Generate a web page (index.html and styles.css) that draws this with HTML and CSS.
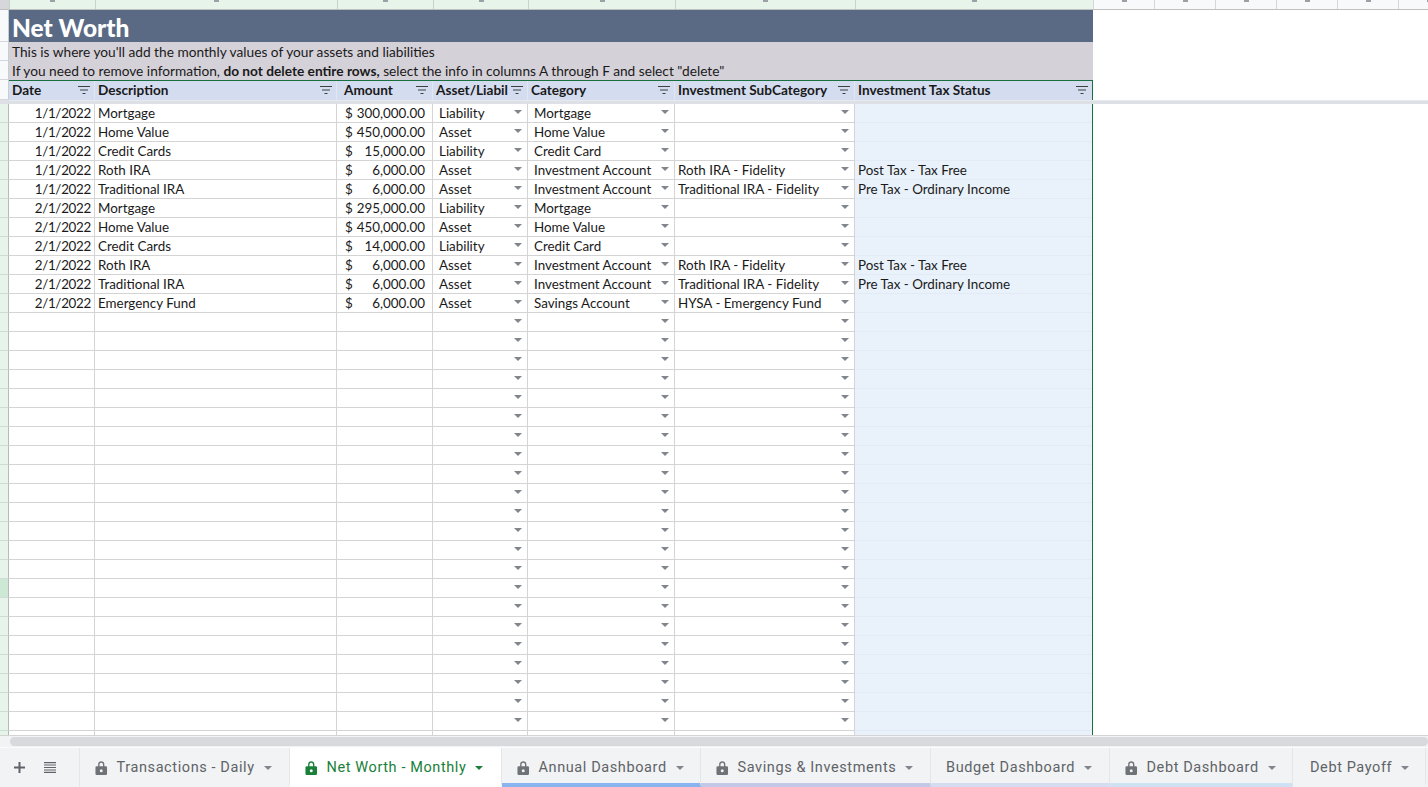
FILE: index.html
```html
<!DOCTYPE html>
<html lang="en">
<head>
    <meta charset="UTF-8">
    <title>Net Worth - Monthly</title>
    <link rel="stylesheet" href="styles.css">
</head>
<body>
    <div id="app">
        <div class="col-headers">
            <div class="corner"></div>
            <div class="col-head sel w-a"></div>
            <div class="col-head sel w-b"></div>
            <div class="col-head sel w-c"></div>
            <div class="col-head sel w-d"></div>
            <div class="col-head sel w-e"></div>
            <div class="col-head sel w-f"></div>
            <div class="col-head sel w-g"></div>
            <div class="col-head w-x"></div>
            <div class="col-head w-x"></div>
            <div class="col-head w-x"></div>
            <div class="col-head w-x"></div>
            <div class="col-head w-x"></div>
            <div class="col-head w-x"></div>
        </div>
        <div class="sheet">
            <div class="row-headers" id="row-headers"></div>
            <div class="grid-area">
                <div class="frozen">
                    <div class="title">Net Worth</div>
                    <div class="notes">
                        <div>This is where you'll add the monthly values of your assets and liabilities</div>
                        <div>If you need to remove information, <b>do not delete entire rows,</b> select the info in columns A through F and select "delete"</div>
                    </div>
                    <div class="table-head" id="table-head"></div>
                </div>
                <div class="freeze-bar"></div>
                <div class="rows" id="rows"></div>
            </div>
        </div>
        <div class="scrollbar"><div class="thumb"></div></div>
        <div class="tabbar">
            <div class="tab-tools">
                <svg class="tool" viewBox="0 0 11 11" width="11" height="11"><path d="M4.5 0h2v4.5H11v2H6.5V11h-2V6.5H0v-2h4.5z" fill="#5f6368"/></svg>
                <svg class="tool" viewBox="0 0 12 11" width="12" height="11"><path d="M0 0h12v1.2H0zM0 2.4h12v1.2H0zM0 4.9h12v1.2H0zM0 7.4h12v1.2H0zM0 9.8h12V11H0z" fill="#5f6368"/></svg>
            </div>
            <div id="tabs" class="tabs"></div>
        </div>
    </div>

    <script>
        const heads = [
            ['Date', 'w-a'], ['Description', 'w-b'], ['Amount', 'w-c'], ['Asset/Liabil', 'w-d'],
            ['Category', 'w-e'], ['Investment SubCategory', 'w-f'], ['Investment Tax Status', 'w-g']
        ];
        const data = [
            ['1/1/2022', 'Mortgage', '300,000.00', 'Liability', 'Mortgage', '', ''],
            ['1/1/2022', 'Home Value', '450,000.00', 'Asset', 'Home Value', '', ''],
            ['1/1/2022', 'Credit Cards', '15,000.00', 'Liability', 'Credit Card', '', ''],
            ['1/1/2022', 'Roth IRA', '6,000.00', 'Asset', 'Investment Account', 'Roth IRA - Fidelity', 'Post Tax - Tax Free'],
            ['1/1/2022', 'Traditional IRA', '6,000.00', 'Asset', 'Investment Account', 'Traditional IRA - Fidelity', 'Pre Tax - Ordinary Income'],
            ['2/1/2022', 'Mortgage', '295,000.00', 'Liability', 'Mortgage', '', ''],
            ['2/1/2022', 'Home Value', '450,000.00', 'Asset', 'Home Value', '', ''],
            ['2/1/2022', 'Credit Cards', '14,000.00', 'Liability', 'Credit Card', '', ''],
            ['2/1/2022', 'Roth IRA', '6,000.00', 'Asset', 'Investment Account', 'Roth IRA - Fidelity', 'Post Tax - Tax Free'],
            ['2/1/2022', 'Traditional IRA', '6,000.00', 'Asset', 'Investment Account', 'Traditional IRA - Fidelity', 'Pre Tax - Ordinary Income'],
            ['2/1/2022', 'Emergency Fund', '6,000.00', 'Asset', 'Savings Account', 'HYSA - Emergency Fund', '']
        ];
        const tabs = [
            { name: 'Transactions - Daily', lock: true, cls: 'tab-1' },
            { name: 'Net Worth - Monthly', lock: true, cls: 'tab-2 active' },
            { name: 'Annual Dashboard', lock: true, cls: 'tab-3' },
            { name: 'Savings & Investments', lock: true, cls: 'tab-4' },
            { name: 'Budget Dashboard', lock: false, cls: 'tab-5' },
            { name: 'Debt Dashboard', lock: true, cls: 'tab-6' },
            { name: 'Debt Payoff', lock: false, cls: 'tab-7' }
        ];
        const lockIcon = '<svg class="lock" viewBox="0 0 14 18" width="12.5" height="16"><path fill-rule="evenodd" d="M3.5 7V5a3.5 3.5 0 0 1 7 0v2H12a1.5 1.5 0 0 1 1.5 1.5v7A1.5 1.5 0 0 1 12 17H2a1.5 1.5 0 0 1-1.5-1.5v-7A1.5 1.5 0 0 1 2 7zM5 7h4V5a2 2 0 0 0-4 0zM7 10.3a1.7 1.7 0 1 0 0 3.4 1.7 1.7 0 0 0 0-3.4z"/></svg>';
        const filterIcon = '<svg class="filter" viewBox="0 0 12 8" width="12" height="8"><path d="M0 0h12v1H0zM2 3.5h8v1H2zM4.5 7h3v1h-3z"/></svg>';
        const arrow = '<span class="arrow"></span>';

        document.getElementById('table-head').innerHTML = heads.map(h =>
            `<div class="th ${h[1]}"><span>${h[0]}</span>${filterIcon}</div>`).join('');

        function rowHtml(r) {
            return `<div class="tr">
                <div class="td w-a right">${r[0]}</div>
                <div class="td w-b">${r[1]}</div>
                <div class="td w-c money">${r[2] ? '<span>$</span><span>' + r[2] + '</span>' : ''}</div>
                <div class="td w-d chip">${r[3]}${arrow}</div>
                <div class="td w-e chip">${r[4]}${arrow}</div>
                <div class="td w-f">${r[5]}${arrow}</div>
                <div class="td w-g tax">${r[6]}</div>
            </div>`;
        }
        let html = data.map(rowHtml).join('');
        for (let i = 0; i < 23; i++) html += rowHtml(['', '', '', '', '', '', '']);
        document.getElementById('rows').innerHTML = html;

        // row numbers are cut off in the shot, only the cells are left
        let strip = '<div class="rh rh-corner"></div><div class="rh rh-note"></div><div class="rh rh-note"></div><div class="rh rh-head"></div><div class="rh-bar"></div>';
        for (let i = 0; i < 34; i++) strip += `<div class="rh rh-row${i === 25 ? ' rh-sel' : ''}"></div>`;
        document.getElementById('row-headers').innerHTML = strip;

        document.getElementById('tabs').innerHTML = tabs.map(t =>
            `<div class="tab ${t.cls}">${t.lock ? lockIcon : ''}<span class="tab-name">${t.name.replace('&', '&amp;')}</span><span class="tab-arrow"></span></div>`).join('');
    </script>
</body>
</html>
```

FILE: styles.css
```css
html, body {
    margin: 0;
    padding: 0;
    height: 100%;
    overflow: hidden;
    background-color: white;
}
#app {
    width: 1428px;
    height: 787px;
    display: flex;
    flex-direction: column;
    overflow: hidden;
    font-family: Lato, 'Open Sans', sans-serif;
    font-size: 13.4px;
    color: #1a1a1a;
}
.w-a { width: 86px; }
.w-b { width: 242px; }
.w-c { width: 96px; }
.w-d { width: 95px; }
.w-e { width: 147px; }
.w-f { width: 180px; }
.w-g { width: 238px; }
.w-x { width: 61px; }

.col-headers {
    display: flex;
    height: 10px;
    flex: none;
    box-sizing: border-box;
    border-bottom: 1px solid #c0c0c0;
    background-color: #f8f9fa;
}
.corner {
    width: 9px;
    flex: none;
    background-color: #d5d7da;
}
.col-head {
    flex: none;
    box-sizing: border-box;
    border-left: 1px solid #d3d6da;
    display: flex;
    justify-content: center;
}
/* just the foot of the column letter shows above the sheet */
.col-head::after {
    content: "";
    width: 5px;
    height: 2px;
    background-color: #9aa0a6;
}
.col-head.sel {
    background-color: #e6f4ea;
    border-left-color: #c4d6c8;
}

.sheet {
    flex: 1;
    display: flex;
    min-height: 0;
    overflow: hidden;
}
.row-headers {
    width: 9px;
    flex: none;
    overflow: hidden;
}
.rh {
    box-sizing: border-box;
    height: 19px;
    background-color: #f8f9fa;
    border-right: 1px solid #c8cdd0;
    border-bottom: 1px solid #d3d6da;
}
.rh-corner { height: 32px; }
.rh-head { height: 20px; }
.rh-bar {
    height: 4px;
    background-color: #dde1e6;
}
.rh-row {
    background-color: #e6f4ea;
    border-right-color: #b5babd;
    border-bottom-color: #cfdcd3;
}
.rh-sel {
    background-color: #cde8d5;
}
.grid-area {
    width: 1084px;
    flex: none;
    box-sizing: border-box;
    background-color: white;
}
.frozen {
    width: 1084px;
}
.title {
    height: 32px;
    line-height: 36px;
    padding-left: 3px;
    background-color: #5a6a85;
    color: white;
    font-size: 24.5px;
    font-weight: 900;
}
.notes {
    height: 38px;
    padding-left: 3px;
    background-color: #d5d1d9;
    line-height: 19px;
    font-size: 13.7px;
}
.notes b {
    font-weight: 700;
}
.table-head {
    display: flex;
    height: 20px;
    box-sizing: border-box;
    background-color: #d4dcef;
    border-top: 1px solid #1b6e40;
    border-right: 1px solid #1b6e40;
    font-weight: 700;
    font-size: 13.6px;
}
.th {
    flex: none;
    box-sizing: border-box;
    position: relative;
    padding-left: 3px;
    line-height: 19px;
    border-right: 1px solid #e3e7f0;
    white-space: nowrap;
    overflow: hidden;
}
.th.w-c {
    padding-left: 7px;
}
.th.w-g {
    width: 237px;
    border-right: none;
}
.filter {
    position: absolute;
    right: 4px;
    top: 5px;
    fill: #3c4043;
}
.freeze-bar {
    height: 3px;
    width: 1428px;
    background-color: #dde1e6;
    border-top: 1px solid #e6e9f0;
}
.rows {
    border-right: 1px solid #1b6e40;
    box-sizing: border-box;
    width: 1084px;
}
.tr {
    display: flex;
    height: 19px;
    box-sizing: border-box;
}
.td {
    flex: none;
    box-sizing: border-box;
    position: relative;
    height: 19px;
    padding: 0 3px;
    line-height: 18px;
    border-right: 1px solid #d4d4d4;
    border-bottom: 1px solid #d4d4d4;
    white-space: nowrap;
    overflow: hidden;
}
.right {
    text-align: right;
    letter-spacing: -0.3px;
}
.money {
    display: flex;
    justify-content: space-between;
    padding: 0 7px 0 8px;
}
.chip {
    padding-left: 6px;
}
.td.tax {
    width: 237px;
    background-color: #e9f1fa;
    border-right: none;
    border-bottom: 1px solid #e1eaf5;
}
.arrow {
    position: absolute;
    right: 5px;
    top: 6px;
    width: 0;
    height: 0;
    border-left: 4px solid transparent;
    border-right: 4px solid transparent;
    border-top: 4px solid #80868b;
}

.scrollbar {
    height: 12px;
    flex: none;
    padding: 1px 0 1px 10px;
    box-sizing: border-box;
    background-color: #f1f3f4;
    border-top: 1px solid #d4d4d4;
}
.thumb {
    height: 9px;
    border-radius: 5px;
    background-color: #d7d9dc;
}
.tabbar {
    height: 40px;
    flex: none;
    display: flex;
    box-sizing: border-box;
    border-top: 1px solid #fbfbfb;
    background-color: #f1f3f4;
    font-family: Roboto, sans-serif;
    font-size: 14.5px;
    letter-spacing: 0.6px;
    color: #5f6368;
}
.tab-tools {
    width: 80px;
    flex: none;
    box-sizing: border-box;
    display: flex;
    align-items: center;
    gap: 19px;
    padding: 0 0 0 14px;
    border-right: 1px solid #e4e6e8;
}
.tabs {
    display: flex;
}
.tab {
    flex: none;
    box-sizing: border-box;
    display: flex;
    align-items: center;
    padding-left: 15px;
    border-right: 1px solid #e4e6e8;
    border-bottom: 4px solid transparent;
    fill: #6f7377;
    padding-top: 4px;
}
.lock {
    margin-right: 9px;
}
.tab-name {
    white-space: nowrap;
}
.tab-arrow {
    margin-left: 9px;
    width: 0;
    height: 0;
    border-left: 4px solid transparent;
    border-right: 4px solid transparent;
    border-top: 4px solid #80868b;
}
.tab.active {
    background-color: white;
    color: #188038;
    fill: #188038;
    border-bottom-color: white;
}
.tab.active .tab-arrow {
    border-top-color: #188038;
}
.tab-1 { width: 210px; }
.tab-2 { width: 212px; }
.tab-3 { width: 199px; border-bottom-color: #8ab4f0; }
.tab-4 { width: 230px; border-bottom-color: #c3c8e6; }
.tab-5 { width: 179px; border-bottom-color: #d6dcf0; }
.tab-6 { width: 183px; border-bottom-color: #cfe2f3; }
.tab-7 { width: 133px; padding-left: 17px; }
```
